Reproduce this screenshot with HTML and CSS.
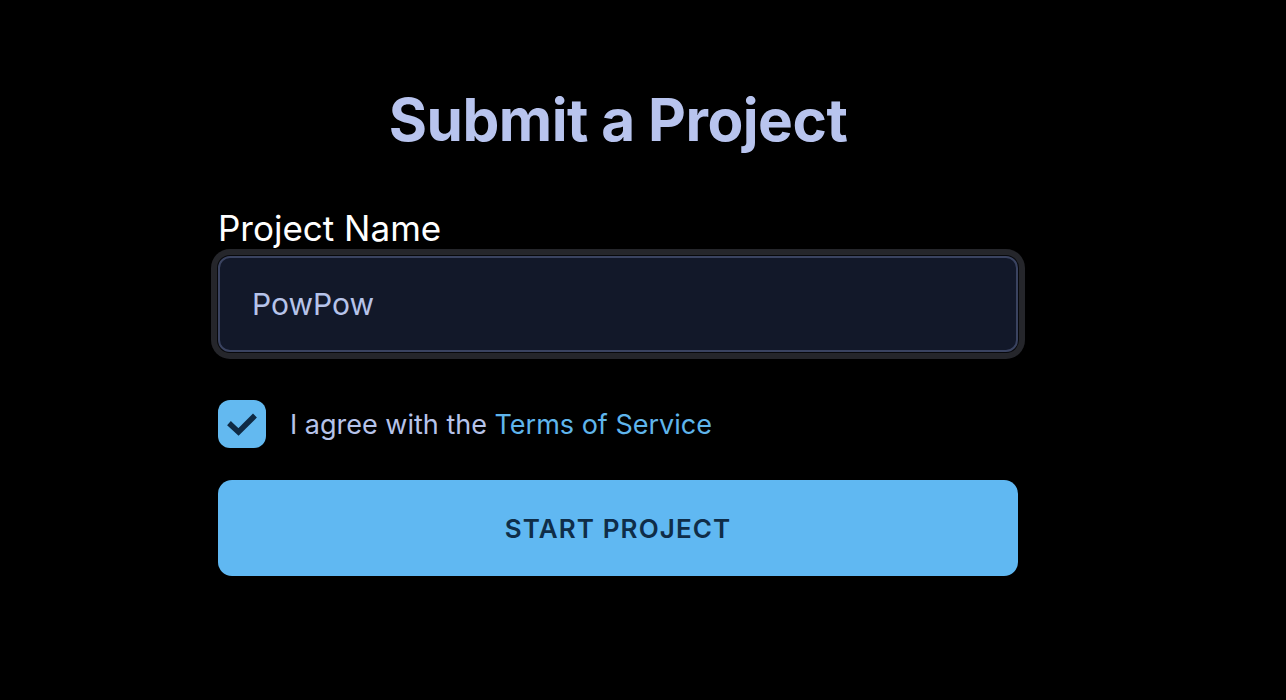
FILE: index.html
```html
<!DOCTYPE html>
<html>
<head>
<meta charset="utf-8">
<link rel="stylesheet" href="styles.css">
</head>
<body>
<main class="form">
  <h1 class="title">Submit a Project</h1>
  <label class="label" for="name">Project Name</label>
  <div class="field"><input id="name" class="input" value="PowPow"></div>
  <div class="agree">
    <span class="check"><svg width="32" height="32" viewBox="0 0 32 32"><path d="M5 17 L12.5 24 L27 9.5" fill="none" stroke="#0f2a44" stroke-width="5.5" stroke-linecap="square" stroke-linejoin="miter"/></svg></span>
    <span class="agree-text">I agree with the <a class="link">Terms of Service</a></span>
  </div>
  <button class="btn">START PROJECT</button>
</main>
</body>
</html>
```
FILE: styles.css
```css
html, body { margin: 0; padding: 0; background: #000; }
body { font-family: Inter, "Noto Sans", sans-serif; width: 1286px; height: 700px; overflow: hidden; }
.form { width: 800px; margin-left: 218px; display: flex; flex-direction: column; }
.title { margin: 80px 0 0; text-align: center; font-size: 58.5px; font-weight: 700; color: #b8c4ee; line-height: 80px; letter-spacing: -0.5px; }
.label { margin: 48px 0 8px; font-size: 35px; color: #fff; line-height: 40px; font-weight: 400; }
.input { box-sizing: border-box; width: 800px; height: 96px; border: 2px solid #3a4360; border-radius: 12px; background: #121829; color: #b6c3ea; font-family: Inter, sans-serif; font-size: 30px; padding: 0 32px; outline: none; box-shadow: 0 0 0 1px #08090c, 0 0 0 7px #25262b; display: block; }
.agree { display: flex; align-items: center; margin-top: 48px; gap: 24px; }
.check { width: 48px; height: 48px; border-radius: 12px; background: #63b9f0; display: flex; align-items: center; justify-content: center; }
.agree-text { font-size: 27px; color: #b6c3ea; }
.link { color: #5fb5ec; }
.btn { margin-top: 32px; width: 800px; height: 96px; border: 0; border-radius: 14px; background: #60b8f2; color: #0f2d48; font-family: Inter, sans-serif; font-size: 26px; font-weight: 600; letter-spacing: 1.1px; }
```
